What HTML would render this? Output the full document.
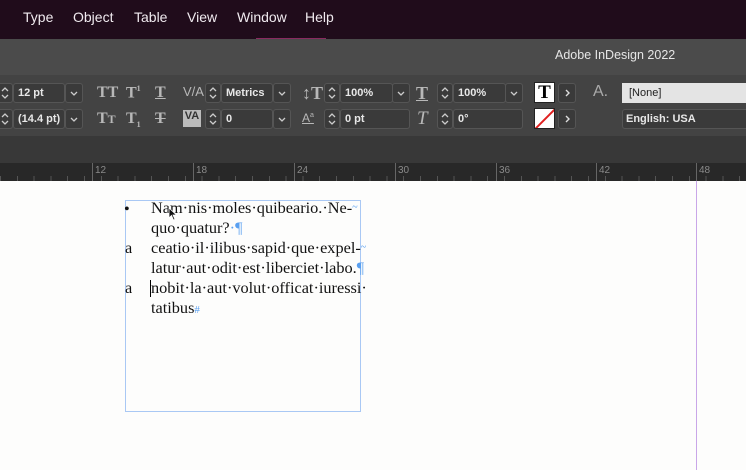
<!DOCTYPE html>
<html><head><meta charset="utf-8"><style>
*{margin:0;padding:0;box-sizing:border-box}
body{width:746px;height:470px;overflow:hidden;background:#fdfdfc;position:relative;font-family:"Liberation Sans",sans-serif}
.a{position:absolute}
.menu{left:0;top:0;width:746px;height:39px;background:#200c1b}
.menu span{position:absolute;top:9px;color:#f0eaef;font-size:14px}
.title{left:0;top:39px;width:746px;height:36px;background:#4b4b4b}
.ctrl{left:0;top:75px;width:746px;height:61px;background:#434343}
.low{left:0;top:136px;width:746px;height:27px;background:#383838}
.ruler{left:0;top:163px;width:746px;height:18px;background:#282828}
.f{position:absolute;height:20px;border:1px solid #555;background:#3a3a3a;border-radius:3px;color:#e8e8e8;font-size:11px;font-weight:bold;line-height:18px;padding-left:4px}
.dd,.sp{position:absolute;height:20px;border:1px solid #555;background:#3a3a3a;border-radius:3px}
.dd{width:18px}.sp{width:16px}
.dd svg,.sp svg{position:absolute;left:0;top:0}
.ic{position:absolute;color:#b8b8b8;font-family:"Liberation Serif",serif;font-size:16px;font-weight:bold}
.rl{position:absolute;top:163px;color:#8a8a8a;font-size:10px;border-left:1px solid #666;height:18px;padding-left:2px;line-height:16px}
.txt{position:absolute;font-family:"Liberation Serif",serif;font-size:16.3px;color:#111;line-height:20px;white-space:nowrap}
.b{color:#5aa0f0}
</style></head><body>
<div class="a menu">
<span style="left:23px">Type</span><span style="left:73px">Object</span><span style="left:134px">Table</span><span style="left:187px">View</span><span style="left:237px">Window</span><span style="left:305px">Help</span>
</div>
<div class="a" style="left:256px;top:38px;width:70px;height:1px;background:#8a2a60"></div>
<div class="a title"><span class="a" style="left:555px;top:9px;color:#e6e6e6;font-size:12.5px">Adobe InDesign 2022</span></div>
<div class="a ctrl"></div>
<div class="a low"></div>
<div class="a ruler"></div>
<div class="rl" style="left:92px">12</div><div class="rl" style="left:193px">18</div><div class="rl" style="left:294px">24</div><div class="rl" style="left:395px">30</div><div class="rl" style="left:496px">36</div><div class="rl" style="left:596px">42</div><div class="rl" style="left:696px">48</div>
<div class="a" style="left:0;top:176px;width:746px;height:5px;background:repeating-linear-gradient(90deg,#555 0 1px,transparent 1px 16.8px)"></div>

<svg width="0" height="0" style="position:absolute"><defs>
<symbol id="spn" viewBox="0 0 14 18"><path d="M4 7 L7 4 L10 7 M4 11 L7 14 L10 11" fill="none" stroke="#ccc" stroke-width="1.3"/></symbol>
<symbol id="ddn" viewBox="0 0 16 18"><path d="M5 8 L8 11 L11 8" fill="none" stroke="#ccc" stroke-width="1.3"/></symbol>
<symbol id="rgt" viewBox="0 0 16 18"><path d="M7 6 L10 9 L7 12" fill="none" stroke="#ddd" stroke-width="1.4"/></symbol>
</defs></svg>

<!-- row 1 -->
<div class="sp" style="left:-3px;top:83px"><svg width="14" height="18"><use href="#spn"/></svg></div>
<div class="f" style="left:13px;top:83px;width:52px">12 pt</div>
<div class="dd" style="left:65px;top:83px"><svg width="16" height="18"><use href="#ddn"/></svg></div>
<div class="ic" style="left:97px;top:84px">TT</div>
<div class="ic" style="left:126px;top:84px">T<sup style="font-size:8px">1</sup></div>
<div class="ic" style="left:155px;top:84px;text-decoration:underline">T</div>
<div class="ic" style="left:183px;top:84px;font-family:'Liberation Sans';font-size:13px;font-weight:normal">V/A</div>
<div class="sp" style="left:205px;top:83px"><svg width="14" height="18"><use href="#spn"/></svg></div>
<div class="f" style="left:221px;top:83px;width:52px">Metrics</div>
<div class="dd" style="left:273px;top:83px"><svg width="16" height="18"><use href="#ddn"/></svg></div>
<div class="ic" style="left:302px;top:83px;font-size:18px">↕T</div>
<div class="sp" style="left:324px;top:83px"><svg width="14" height="18"><use href="#spn"/></svg></div>
<div class="f" style="left:340px;top:83px;width:53px">100%</div>
<div class="dd" style="left:392px;top:83px"><svg width="16" height="18"><use href="#ddn"/></svg></div>
<div class="ic" style="left:416px;top:83px;font-size:18px;text-decoration:underline">T</div>
<div class="sp" style="left:437px;top:83px"><svg width="14" height="18"><use href="#spn"/></svg></div>
<div class="f" style="left:453px;top:83px;width:53px">100%</div>
<div class="dd" style="left:505px;top:83px"><svg width="16" height="18"><use href="#ddn"/></svg></div>
<div class="a" style="left:534px;top:82px;width:21px;height:21px;background:#fff;border:1px solid #222;color:#000;font-family:'Liberation Serif';font-weight:bold;font-size:19px;text-align:center;line-height:19px">T</div>
<div class="dd" style="left:558px;top:83px"><svg width="16" height="18"><use href="#rgt"/></svg></div>
<div class="a" style="left:593px;top:83px;color:#aaa;font-size:16px">A.</div>
<div class="a" style="left:622px;top:83px;width:130px;height:20px;background:#e4e4e4;color:#222;font-size:11px;line-height:20px;padding-left:7px">[None]</div>

<!-- row 2 -->
<div class="sp" style="left:-3px;top:109px"><svg width="14" height="18"><use href="#spn"/></svg></div>
<div class="f" style="left:13px;top:109px;width:52px">(14.4 pt)</div>
<div class="dd" style="left:65px;top:109px"><svg width="16" height="18"><use href="#ddn"/></svg></div>
<div class="ic" style="left:97px;top:110px">T<span style="font-size:12px">T</span></div>
<div class="ic" style="left:126px;top:110px">T<sub style="font-size:8px">1</sub></div>
<div class="ic" style="left:155px;top:110px;text-decoration:line-through">T</div>
<div class="a" style="left:183px;top:110px;width:18px;height:17px;background:#bbb;color:#333;font-size:11px;font-weight:bold;text-align:center;line-height:13px">VA</div>
<div class="sp" style="left:205px;top:109px"><svg width="14" height="18"><use href="#spn"/></svg></div>
<div class="f" style="left:221px;top:109px;width:52px">0</div>
<div class="dd" style="left:273px;top:109px"><svg width="16" height="18"><use href="#ddn"/></svg></div>
<div class="ic" style="left:302px;top:111px;font-size:12px;font-family:'Liberation Sans';font-weight:normal;text-decoration:underline">A<sup style="font-size:7px">a</sup></div>
<div class="sp" style="left:324px;top:109px"><svg width="14" height="18"><use href="#spn"/></svg></div>
<div class="f" style="left:340px;top:109px;width:70px">0 pt</div>
<div class="ic" style="left:417px;top:108px;font-size:19px;font-style:italic;font-weight:normal">T</div>
<div class="sp" style="left:437px;top:109px"><svg width="14" height="18"><use href="#spn"/></svg></div>
<div class="f" style="left:453px;top:109px;width:70px">0°</div>
<div class="a" style="left:534px;top:108px;width:21px;height:21px;background:#fff;border:1px solid #222;overflow:hidden"><div style="position:absolute;left:-4px;top:9px;width:28px;height:1.5px;background:#e02020;transform:rotate(-45deg)"></div></div>
<div class="dd" style="left:558px;top:109px"><svg width="16" height="18"><use href="#rgt"/></svg></div>
<div class="f" style="left:622px;top:109px;width:130px;padding-left:3px">English: USA</div>

<!-- page -->
<div class="a" style="left:696px;top:181px;width:1px;height:289px;background:#c9a6e8"></div>
<div class="a" style="left:125px;top:200px;width:236px;height:212px;border:1px solid #a9c8f4"></div>
<div class="txt" style="left:124px;top:199px">•</div>
<div class="txt" style="left:125px;top:238px">a</div>
<div class="txt" style="left:125px;top:278px">a</div>
<div class="txt" style="left:151px;top:198px">Nam·nis·moles·quibeario.·Ne-<span class="b" style="font-size:10px;vertical-align:top">~</span></div>
<div class="txt" style="left:151px;top:218px">quo·quatur?<span class="b">·¶</span></div>
<div class="txt" style="left:151px;top:238px">ceatio·il·ilibus·sapid·que·expel-<span class="b" style="font-size:10px;vertical-align:top">~</span></div>
<div class="txt" style="left:151px;top:258px">latur·aut·odit·est·liberciet·labo.<span class="b">¶</span></div>
<div class="txt" style="left:151px;top:278px">nobit·la·aut·volut·officat·iuressi·</div>
<div class="txt" style="left:151px;top:298px">tatibus<span class="b" style="font-size:11px">#</span></div>
<div class="a" style="left:150px;top:280px;width:1px;height:17px;background:#000"></div>
<svg class="a" style="left:168px;top:207px" width="10" height="14" viewBox="0 0 10 14"><path d="M1 1 L1 11 L3.5 8.5 L5.5 13 L7 12.3 L5 8 L8.5 8 Z" fill="#111" stroke="#fff" stroke-width="0.8"/></svg>
</body></html>
